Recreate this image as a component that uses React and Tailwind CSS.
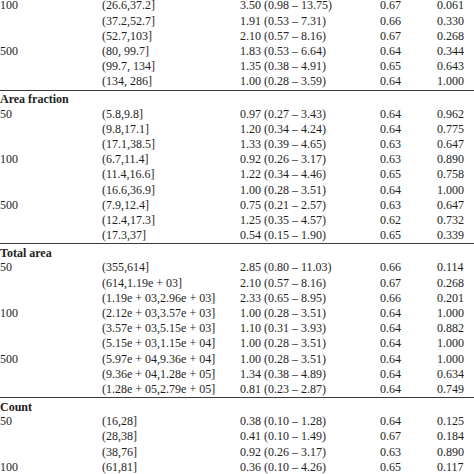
const sections = [
  {
    title: null,
    rows: [
      ['100', '(26.6,37.2]', '3.50 (0.98 – 13.75)', '0.67', '0.061'],
      ['', '(37.2,52.7]', '1.91 (0.53 – 7.31)', '0.66', '0.330'],
      ['', '(52.7,103]', '2.10 (0.57 – 8.16)', '0.67', '0.268'],
      ['500', '(80, 99.7]', '1.83 (0.53 – 6.64)', '0.64', '0.344'],
      ['', '(99.7, 134]', '1.35 (0.38 – 4.91)', '0.65', '0.643'],
      ['', '(134, 286]', '1.00 (0.28 – 3.59)', '0.64', '1.000'],
    ],
  },
  {
    title: 'Area fraction',
    rows: [
      ['50', '(5.8,9.8]', '0.97 (0.27 – 3.43)', '0.64', '0.962'],
      ['', '(9.8,17.1]', '1.20 (0.34 – 4.24)', '0.64', '0.775'],
      ['', '(17.1,38.5]', '1.33 (0.39 – 4.65)', '0.63', '0.647'],
      ['100', '(6.7,11.4]', '0.92 (0.26 – 3.17)', '0.63', '0.890'],
      ['', '(11.4,16.6]', '1.22 (0.34 – 4.46)', '0.65', '0.758'],
      ['', '(16.6,36.9]', '1.00 (0.28 – 3.51)', '0.64', '1.000'],
      ['500', '(7.9,12.4]', '0.75 (0.21 – 2.57)', '0.63', '0.647'],
      ['', '(12.4,17.3]', '1.25 (0.35 – 4.57)', '0.62', '0.732'],
      ['', '(17.3,37]', '0.54 (0.15 – 1.90)', '0.65', '0.339'],
    ],
  },
  {
    title: 'Total area',
    rows: [
      ['50', '(355,614]', '2.85 (0.80 – 11.03)', '0.66', '0.114'],
      ['', '(614,1.19e + 03]', '2.10 (0.57 – 8.16)', '0.67', '0.268'],
      ['', '(1.19e + 03,2.96e + 03]', '2.33 (0.65 – 8.95)', '0.66', '0.201'],
      ['100', '(2.12e + 03,3.57e + 03]', '1.00 (0.28 – 3.51)', '0.64', '1.000'],
      ['', '(3.57e + 03,5.15e + 03]', '1.10 (0.31 – 3.93)', '0.64', '0.882'],
      ['', '(5.15e + 03,1.15e + 04]', '1.00 (0.28 – 3.51)', '0.64', '1.000'],
      ['500', '(5.97e + 04,9.36e + 04]', '1.00 (0.28 – 3.51)', '0.64', '1.000'],
      ['', '(9.36e + 04,1.28e + 05]', '1.34 (0.38 – 4.89)', '0.64', '0.634'],
      ['', '(1.28e + 05,2.79e + 05]', '0.81 (0.23 – 2.87)', '0.64', '0.749'],
    ],
  },
  {
    title: 'Count',
    rows: [
      ['50', '(16,28]', '0.38 (0.10 – 1.28)', '0.64', '0.125'],
      ['', '(28,38]', '0.41 (0.10 – 1.49)', '0.67', '0.184'],
      ['', '(38,76]', '0.92 (0.26 – 3.17)', '0.63', '0.890'],
      ['100', '(61,81]', '0.36 (0.10 – 4.26)', '0.65', '0.117'],
    ],
  },
]

function Row({ cells }) {
  return (
    <div className="grid grid-cols-[102px_138px_140px_57px_1fr] h-[15.2px] leading-[15.2px] whitespace-nowrap">
      {cells.map((c, i) => (
        <div key={i}>{c}</div>
      ))}
    </div>
  )
}

export default function App() {
  return (
    <div className="w-[474px] h-[474px] overflow-hidden bg-white">
      <div className="mt-[-1.6px] text-[12px] text-[#1e1e1e] font-['Liberation_Serif',serif]">
        {sections.map((s, si) => (
          <div key={si}>
            {s.title && (
              <div className="border-t-[1.5px] border-[#3a3a3a] h-[17.1px] pt-[1.5px] leading-[15.6px] font-bold">
                {s.title}
              </div>
            )}
            {s.rows.map((r, ri) => (
              <Row key={ri} cells={r} />
            ))}
          </div>
        ))}
      </div>
    </div>
  )
}
